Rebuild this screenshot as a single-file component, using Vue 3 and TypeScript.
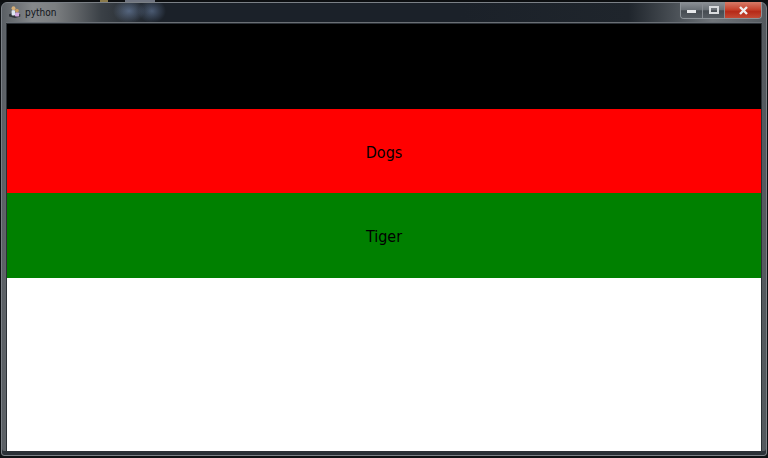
<script setup lang="ts">
const rows = [
  { label: '', color: 'black' },
  { label: 'Dogs', color: 'red' },
  { label: 'Tiger', color: 'green' },
]
</script>

<template>
  <div class="screen">
    <div class="window">
      <header class="titlebar">
        <div class="title">
          <svg class="app-icon" width="12" height="12" viewBox="0 0 16 16">
            <path d="M0 11 L6 9 L15 11 L15 14 L8 16 L0 14 Z" fill="#2e3238" />
            <circle cx="6" cy="3" r="2.6" fill="#d8b078" />
            <rect x="3.5" y="5.5" width="4.5" height="7" rx="1" fill="#dfe8f4" />
            <circle cx="10.5" cy="6" r="2.5" fill="#c99a60" />
            <rect x="8" y="8.5" width="5.5" height="5.5" rx="1" fill="#d4aadf" />
          </svg>
          <span>python</span>
        </div>
        <div class="controls">
          <div class="ctl min"><i></i></div>
          <div class="ctl max"><i></i></div>
          <div class="ctl close">
            <svg width="11" height="9" viewBox="0 0 11 9">
              <path d="M2 1 L9 8 M9 1 L2 8" stroke="#f0f0f0" stroke-width="2.4" fill="none" />
            </svg>
          </div>
        </div>
      </header>
      <main class="client">
        <div v-for="r in rows" :key="r.color" class="band" :style="{ background: r.color }">{{ r.label }}</div>
      </main>
    </div>
  </div>
</template>

<style>
html, body { margin: 0; background: #101317; overflow: hidden; }
</style>

<style scoped>
.screen {
  width: 768px;
  height: 458px;
  box-sizing: border-box;
  padding: 2px 1px 2px 1px;
  background:
    linear-gradient(90deg, #0c0e10 0 100px, #8a7a4a 100px 108px, #0c0e10 108px 125px, #6f7480 125px 155px, #0c0e10 155px) top / 100% 2px no-repeat,
    #0e1114;
}
.window {
  height: 100%;
  box-sizing: border-box;
  display: flex;
  flex-direction: column;
  padding: 0 5px 4px 5px;
  border: 1px solid #7b8086;
  border-radius: 6px 6px 3px 3px;
  background:
    radial-gradient(ellipse 16px 12px at 127px 8px, rgba(120, 145, 185, 0.55), transparent),
    radial-gradient(ellipse 14px 12px at 150px 8px, rgba(120, 145, 185, 0.5), transparent),
    linear-gradient(90deg, #5a5f64 0, #85888b 4%, #7b7e80 7%, #5c6064 10%, #3a4046 13%, #1b2129 20%, #1b2129 60%, #1f252c 82%, #50565c 89%, #70757a 93%, #54595e 100%);
  box-shadow: inset 0 -4px 0 #2a3037;
}
.titlebar {
  height: 21px;
  display: flex;
  justify-content: space-between;
  align-items: flex-start;
  flex: none;
}
.title {
  display: flex;
  align-items: center;
  gap: 4px;
  padding: 3px 0 0 2px;
  font: 10px "DejaVu Sans Condensed", "DejaVu Sans", sans-serif;
  font-stretch: condensed;
  color: #11141a;
}
.controls {
  display: flex;
  height: 16px;
  margin-top: -1px;
  margin-right: -1px;
  border: 1px solid #8d9398;
  border-top: 0;
  border-radius: 0 0 4px 4px;
  overflow: hidden;
}
.ctl {
  height: 100%;
  display: flex;
  align-items: center;
  justify-content: center;
  box-sizing: border-box;
}
.min, .max {
  width: 22px;
  background: linear-gradient(180deg, #8d9297 0%, #6a7076 48%, #464c52 55%, #565c62 100%);
  border-right: 1px solid #878c92;
}
.min i { display: block; width: 9px; height: 3px; margin-top: 3px; background: #e6e8ea; }
.max i { display: block; width: 6px; height: 4px; border: 2px solid #d8dbde; }
.close {
  width: 36px;
  background: linear-gradient(180deg, #d87c68 0%, #c8452f 45%, #b62a18 60%, #c44a34 100%);
}
.client {
  flex: 1;
  background: #fff;
  box-shadow: 0 0 0 1px #2b3036, 0 -1px 0 1px #6a6f75;
}
.band {
  height: 84.5px;
  box-sizing: border-box;
  padding-top: 3px;
  display: flex;
  align-items: center;
  justify-content: center;
  font: 16px "DejaVu Sans Condensed", "DejaVu Sans", sans-serif;
  font-stretch: condensed;
  color: #000;
}
</style>
